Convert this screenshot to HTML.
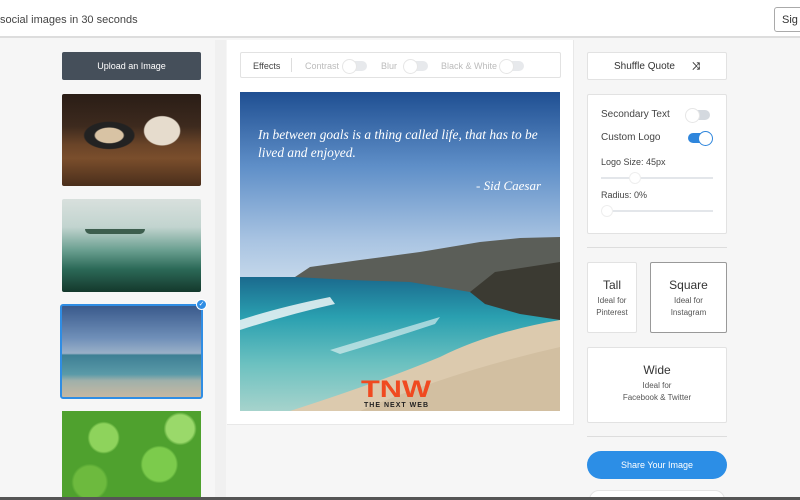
<!DOCTYPE html>
<html><head><meta charset="utf-8"><style>
*{box-sizing:border-box;margin:0;padding:0}
html,body{width:800px;height:500px;overflow:hidden}
body{background:#f6f6f6;font-family:"Liberation Sans",sans-serif;position:relative;color:#333}
.abs{position:absolute}
.hdr{left:0;top:0;width:800px;height:38px;background:#fff;border-bottom:2px solid #ddd}
.box{background:#fff;border:1px solid #e2e2e2;border-radius:2px}
.tg{position:absolute;width:24px;height:10px;border-radius:5px;background:#d4d9df}
.tg::after{content:"";position:absolute;left:-1px;top:-2px;width:13px;height:13px;border-radius:50%;background:#fff;border:1px solid #e6e6e6}
.tg.on{background:#2f86dc}
.tg.on::after{left:auto;right:-1px;border-color:#2f86dc}
.sl{position:absolute;height:2px;background:#e3e6ea}
.sl i{position:absolute;top:-5px;width:12px;height:12px;border-radius:50%;background:#fff;border:1px solid #eee}
.c{text-align:center}
</style></head><body>
<div class="abs hdr"></div>
<div class="abs" style="left:0;top:14px;font-size:11px;color:#444">social images in 30 seconds</div>
<div class="abs" style="left:774px;top:7px;width:40px;height:25px;border:1px solid #aaa;border-radius:3px;font-size:11px;padding:6px 0 0 7px;color:#333">Sig</div>

<div class="abs" style="left:215px;top:40px;width:11px;height:460px;background:#f0f0f0"></div>
<div class="abs" style="left:62px;top:52px;width:139px;height:28px;background:#454f5a;border-radius:2px;color:#fff;font-size:9px;text-align:center;line-height:28px">Upload an Image</div>
<div class="abs" style="left:62px;top:94px;width:139px;height:92px;border-radius:2px;background:radial-gradient(ellipse 22% 18% at 34% 45%,#d8c3a4 0 45%,#222 50% 80%,transparent 85%),radial-gradient(ellipse 18% 22% at 72% 40%,#e6dccd 0 70%,transparent 75%),linear-gradient(180deg,#2a1d16 0%,#3d2a1e 35%,#6a4428 55%,#7a4e2c 70%,#4a2e1b 100%)"></div>
<div class="abs" style="left:62px;top:199px;width:139px;height:93px;border-radius:2px;background:linear-gradient(180deg,#d8e0dd 0%,#c2d4cf 30%,#6a9f90 55%,#2c6a58 75%,#14382c 100%)"></div>
<div class="abs" style="left:85px;top:229px;width:60px;height:5px;background:#3d5e4e;border-radius:0 0 20px 20px"></div>
<div class="abs" style="left:60px;top:304px;width:143px;height:95px;border:2px solid #2f8de4;border-radius:3px;overflow:hidden;background:linear-gradient(180deg,#3a5a8c 0%,#6f8fb8 35%,#9ab0c8 52%,#3e7f94 54%,#5a9aa8 75%,#9fb0aa 82%,#c7b8a2 100%)"></div>
<div class="abs" style="left:196px;top:299px;width:11px;height:11px;border-radius:50%;background:#2f8de4;border:1px solid #fff;color:#fff;font-size:7px;text-align:center;line-height:9px">✓</div>
<div class="abs" style="left:62px;top:411px;width:139px;height:89px;background:radial-gradient(circle at 30% 30%,#8ed35c 0 12%,transparent 14%),radial-gradient(circle at 70% 60%,#7ccb4c 0 15%,transparent 17%),radial-gradient(circle at 20% 80%,#6dba3e 0 12%,transparent 14%),radial-gradient(circle at 85% 20%,#9ad96a 0 10%,transparent 12%),#4fa12e"></div>

<div class="abs" style="left:227px;top:40px;width:347px;height:385px;background:#fff;border-right:1px solid #e8e8e8;border-bottom:1px solid #e8e8e8"></div>
<div class="abs box" style="left:240px;top:52px;width:321px;height:26px"></div>
<div class="abs" style="left:253px;top:61px;font-size:9px;color:#444">Effects</div>
<div class="abs" style="left:291px;top:58px;width:1px;height:14px;background:#ddd"></div>
<div class="abs" style="left:305px;top:61px;font-size:9px;color:#bbb">Contrast</div>
<div class="tg" style="left:343px;top:61px;background:#e7e9ec"></div>
<div class="abs" style="left:381px;top:61px;font-size:9px;color:#bbb">Blur</div>
<div class="tg" style="left:404px;top:61px;background:#e7e9ec"></div>
<div class="abs" style="left:441px;top:61px;font-size:9px;color:#bbb">Black &amp; White</div>
<div class="tg" style="left:500px;top:61px;background:#e7e9ec"></div>

<svg class="abs" style="left:240px;top:92px" width="320" height="319" viewBox="0 0 320 319">
<defs>
<linearGradient id="sky" x1="0" y1="0" x2="0" y2="1"><stop offset="0" stop-color="#1f4f92"/><stop offset=".4" stop-color="#5f8fc8"/><stop offset=".8" stop-color="#a9c4e2"/><stop offset="1" stop-color="#c4d7ea"/></linearGradient>
<linearGradient id="sea" x1="0" y1="0" x2="0" y2="1"><stop offset="0" stop-color="#1a6a8e"/><stop offset=".3" stop-color="#2aa0b0"/><stop offset=".65" stop-color="#6cc1c0"/><stop offset="1" stop-color="#a6d3cc"/></linearGradient>
</defs>
<rect width="320" height="186" fill="url(#sky)"/>
<rect y="185" width="320" height="134" fill="url(#sea)"/>
<path d="M55 185 L70 175 L120 168 L180 160 L240 150 L280 146 L320 145 L320 225 L290 222 L260 215 L240 205 L230 200 L170 190 L110 188 Z" fill="#5b5e58"/>
<path d="M230 200 L255 180 L320 170 L320 228 L280 222 L245 212Z" fill="#3b3a32"/>
<path d="M0 228 Q40 215 90 205 L95 212 Q50 222 0 238Z" fill="#eef6f7" opacity=".85"/>
<path d="M90 258 Q150 240 200 225 L195 232 Q150 247 100 262Z" fill="#eef6f7" opacity=".6"/>
<path d="M50 319 Q140 290 200 265 Q250 240 320 228 L320 319Z" fill="#dccaae"/>
<path d="M120 319 Q210 280 320 255 L320 319Z" fill="#d2bfa1"/>
<text x="18" y="47" font-family="Liberation Serif,serif" font-style="italic" font-size="13.4" fill="#fff">In between goals is a thing called life, that has to be</text>
<text x="18" y="65" font-family="Liberation Serif,serif" font-style="italic" font-size="13.4" fill="#fff">lived and enjoyed.</text>
<text x="236" y="98" font-family="Liberation Serif,serif" font-style="italic" font-size="13" fill="#fff">- Sid Caesar</text>
<text x="121" y="305" font-family="Liberation Sans,sans-serif" font-weight="bold" font-size="24" fill="#f04a20" textLength="70" lengthAdjust="spacingAndGlyphs">TNW</text>
<text x="124" y="315" font-family="Liberation Sans,sans-serif" font-weight="bold" font-size="7" fill="#222" textLength="64">THE NEXT WEB</text>
</svg>

<div class="abs box" style="left:587px;top:52px;width:140px;height:28px;font-size:10px;padding:8px 0 0 26px;color:#333">Shuffle Quote <span style="margin-left:14px;font-weight:bold">⤨</span></div>
<div class="abs box" style="left:587px;top:94px;width:140px;height:140px"></div>
<div class="abs" style="left:601px;top:109px;font-size:10px;color:#444">Secondary Text</div>
<div class="tg" style="left:686px;top:110px"></div>
<div class="abs" style="left:601px;top:132px;font-size:10px;color:#444">Custom Logo</div>
<div class="tg on" style="left:688px;top:133px"></div>
<div class="abs" style="left:601px;top:157px;font-size:9px;color:#444">Logo Size: 45px</div>
<div class="sl" style="left:601px;top:177px;width:112px"><i style="left:28px"></i></div>
<div class="abs" style="left:601px;top:190px;font-size:9px;color:#444">Radius: 0%</div>
<div class="sl" style="left:601px;top:210px;width:112px"><i style="left:0"></i></div>
<div class="abs" style="left:587px;top:247px;width:140px;height:1px;background:#ddd"></div>
<div class="abs box c" style="left:587px;top:262px;width:50px;height:71px;padding-top:15px"><div style="font-size:12px">Tall</div><div style="font-size:8px;color:#555;margin-top:3px;line-height:12px">Ideal for<br>Pinterest</div></div>
<div class="abs box c" style="left:650px;top:262px;width:77px;height:71px;padding-top:15px;border:1px solid #999"><div style="font-size:12px">Square</div><div style="font-size:8px;color:#555;margin-top:3px;line-height:12px">Ideal for<br>Instagram</div></div>
<div class="abs box c" style="left:587px;top:347px;width:140px;height:76px;padding-top:15px"><div style="font-size:12px">Wide</div><div style="font-size:8px;color:#555;margin-top:3px;line-height:12px">Ideal for<br>Facebook &amp; Twitter</div></div>
<div class="abs" style="left:587px;top:436px;width:140px;height:1px;background:#ddd"></div>
<div class="abs c" style="left:587px;top:451px;width:140px;height:28px;border-radius:14px;background:#2c8ee6;color:#fff;font-size:9px;line-height:28px">Share Your Image</div>
<div class="abs" style="left:589px;top:490px;width:136px;height:20px;border-radius:10px;background:#fff;border:1px solid #e5e5e5"></div>
<div class="abs" style="left:0;top:497px;width:800px;height:3px;background:#555"></div>
</body></html>
